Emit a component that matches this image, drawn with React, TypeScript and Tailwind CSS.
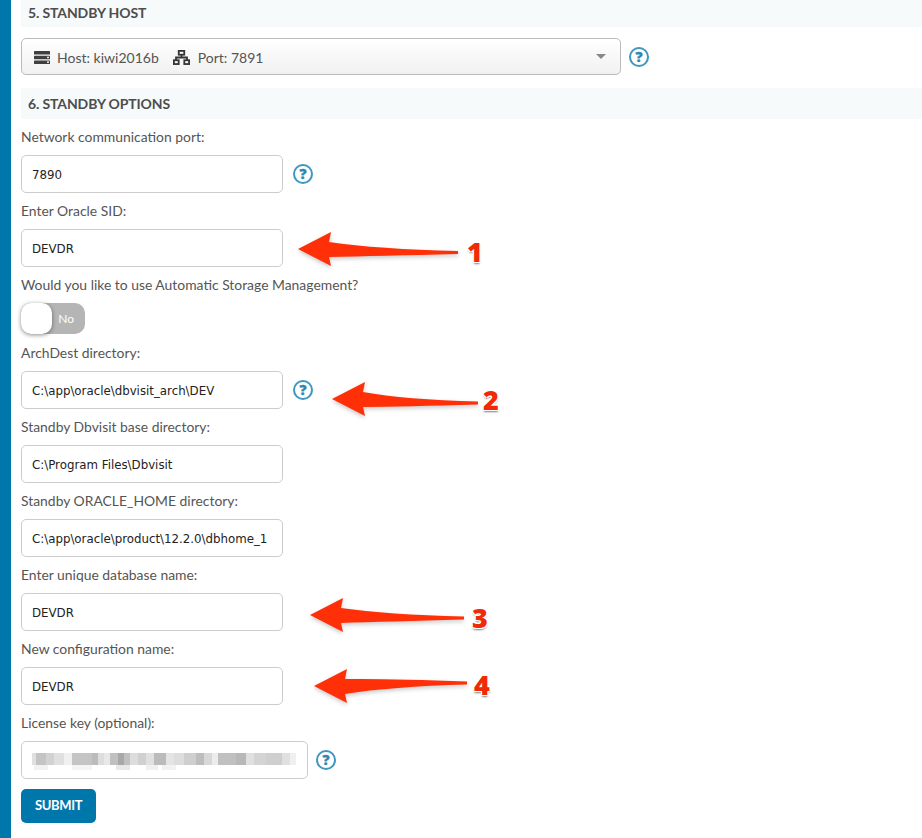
const lato = "font-['Lato','Liberation_Sans',sans-serif]";

function Help() {
  return (
    <span className="flex h-5 w-5 shrink-0 items-center justify-center rounded-full border-2 border-[#3f96bf] font-['Open_Sans',sans-serif] text-[14px] leading-none font-extrabold text-[#2f86b3] [-webkit-text-stroke:0.3px_#2f86b3]">
      ?
    </span>
  );
}

function Heading({ children, className }: { children: string; className: string }) {
  return (
    <div className={`flex items-center bg-[#f6fafb] pl-[7px] text-[14px] font-bold tracking-[-0.12px] text-[#4d4d4d] ${className}`}>
      {children}
    </div>
  );
}

function Field({
  label,
  value,
  help,
  wide,
  children,
}: {
  label: string;
  value?: string;
  help?: boolean;
  wide?: boolean;
  children?: React.ReactNode;
}) {
  return (
    <div className="pt-2">
      <div className="mb-2 h-5 text-[13.9px] leading-5 text-[#555555]">{label}</div>
      <div className={`flex items-center ${wide ? "gap-2" : "gap-[10px]"}`}>
        <div
          className={`flex h-[38px] items-center rounded-[5px] border border-[#cccccc] bg-white px-[10px] pt-[3px] font-['DejaVu_Sans',sans-serif] text-[11.8px] whitespace-nowrap text-[#222222] ${wide ? "w-[287px]" : "w-[262px]"}`}
        >
          {value}
          {children}
        </div>
        {help && <Help />}
      </div>
    </div>
  );
}

function Arrow({ left, top, width, dy }: { left: number; top: number; width: number; dy: number }) {
  const e = 17 + dy;
  return (
    <svg
      className="absolute overflow-visible drop-shadow-[0_2px_2px_rgba(0,0,0,0.22)]"
      style={{ left, top }}
      width={width}
      height={34}
      viewBox={`0 0 ${width} 34`}
    >
      <path
        d={`M0 17 L33 0 L31 10 Q${width * 0.5} ${e - 4 + dy * 0.2} ${width} ${e - 1.5} L${width} ${e + 1.5} Q${width * 0.5} ${e + 3.5} 31 25 L33 34 Z`}
        fill="#ff3008"
      />
    </svg>
  );
}

function Num({ left, top, children }: { left: number; top: number; children: string }) {
  return (
    <span
      className="absolute font-['Open_Sans',sans-serif] text-[27px] leading-none font-extrabold text-[#ef2a06] [text-shadow:-1px_-1px_0_#fff,1px_-1px_0_#fff,-1px_1px_0_#fff,1px_1px_0_#fff,0_2px_2px_rgba(0,0,0,0.5)]"
      style={{ left, top }}
    >
      {children}
    </span>
  );
}

const blur = [
  [0, 4, "#e0e0e0"], [4, 10, "#c4c4c4"], [14, 8, "#d2d2d2"], [22, 10, "#e0e0e0"], [32, 8, "#f0f0f0"],
  [40, 20, "#c4c4c4"], [60, 6, "#bbbbbb"], [66, 6, "#dddddd"], [72, 6, "#e8e8e8"], [78, 8, "#c0c0c0"],
  [86, 6, "#a8a8a8"], [92, 6, "#c0c0c0"], [98, 8, "#dddddd"], [106, 8, "#d0d0d0"], [114, 8, "#e0e0e0"],
  [122, 12, "#bbbbbb"], [134, 8, "#e4e4e4"], [142, 10, "#dddddd"], [152, 12, "#cfcfcf"], [164, 8, "#bdbdbd"],
  [172, 8, "#d8d8d8"], [180, 6, "#ececec"], [186, 18, "#c0c0c0"], [204, 10, "#b8b8b8"], [214, 8, "#e0e0e0"],
  [222, 12, "#d4d4d4"], [234, 16, "#cfcfcf"], [250, 8, "#e0e0e0"], [258, 6, "#f0f0f0"],
] as const;

const blurLow = [
  [2, 14, "#f2f2f2"], [40, 20, "#f4f4f4"], [84, 14, "#e8e8e8"], [114, 12, "#f0f0f0"], [130, 14, "#f2f2f2"],
] as const;

export default function App() {
  return (
    <div className={`relative flex h-[838px] w-[922px] overflow-hidden bg-white ${lato}`}>
      <div className="w-[11px] shrink-0 bg-[#0077aa]" />
      <main className="flex-1 pl-[10px]">
        <Heading className="h-[27px] pb-[2px]">5. STANDBY HOST</Heading>
        <div className="mt-[11px] flex items-center gap-2">
          <div className="flex h-[37px] w-[600px] items-center justify-between rounded-[5px] border border-[#bbbbbb] bg-gradient-to-b from-white to-[#f1f1f1] pt-px pr-[14px] pl-[12px] text-[14px] text-[#555555]">
            <div className="flex items-center">
              <svg width="16" height="13" viewBox="0 0 16 13" fill="#3f3f3f" className="mr-[7px]">
                <rect x="0" y="0" width="16" height="3.6" rx="0.5" />
                <rect x="0" y="4.7" width="16" height="3.6" rx="0.5" />
                <rect x="0" y="9.4" width="16" height="3.6" rx="0.5" />
                <rect x="13" y="5.7" width="2" height="1.5" fill="#eee" />
                <rect x="13" y="10.4" width="2" height="1.5" fill="#eee" />
              </svg>
              <span>Host: kiwi2016b</span>
              <svg width="17" height="15" viewBox="0 0 17 15" fill="none" stroke="#333333" strokeWidth="1.8" className="mr-2 ml-[14px]">
                <rect x="5.75" y="0.9" width="5.5" height="3.8" />
                <path d="M8.5 5v2.5M3 10V7.5h11V10" />
                <rect x="0.9" y="10.25" width="4.8" height="3.8" />
                <rect x="11.3" y="10.25" width="4.8" height="3.8" />
              </svg>
              <span>Port: 7891</span>
            </div>
            <div className="mb-[2px] h-0 w-0 border-x-[5px] border-t-[5px] border-x-transparent border-t-[#888888]" />
          </div>
          <Help />
        </div>
        <Heading className="mt-[13px] h-[31px]">6. STANDBY OPTIONS</Heading>
        <Field label="Network communication port:" value="7890" help />
        <Field label="Enter Oracle SID:" value="DEVDR" />
        <div className="pt-2">
          <div className="mb-2 h-5 text-[13.9px] leading-5 text-[#555555]">Would you like to use Automatic Storage Management?</div>
          <div className="relative flex h-[31px] w-16 items-center justify-end rounded-[10px] bg-[#b5b5b5] pr-[11px] text-[12px] text-white">
            No
            <div className="absolute top-0 left-0 h-[31px] w-[31px] rounded-[10px] bg-white shadow-[0_1px_4px_rgba(0,0,0,0.45)]" />
          </div>
        </div>
        <div className="h-px" />
        <Field label="ArchDest directory:" value="C:\app\oracle\dbvisit_arch\DEV" help />
        <Field label="Standby Dbvisit base directory:" value="C:\Program Files\Dbvisit" />
        <Field label="Standby ORACLE_HOME directory:" value="C:\app\oracle\product\12.2.0\dbhome_1" />
        <Field label="Enter unique database name:" value="DEVDR" />
        <Field label="New configuration name:" value="DEVDR" />
        <Field label="License key (optional):" help wide>
          <svg width="264" height="22" viewBox="0 0 264 22" className="blur-[0.7px]">
            {blur.map(([x, w, c], i) => (
              <rect key={i} x={x} y={2} width={w} height={12} fill={c} />
            ))}
            {blurLow.map(([x, w, c], i) => (
              <rect key={i} x={x} y={14} width={w} height={5} fill={c} />
            ))}
          </svg>
        </Field>
        <button className="mt-[10px] flex h-[34px] w-[75px] items-center justify-center rounded-[5px] bg-[#0077aa] text-[13px] font-bold tracking-[-0.35px] text-white">
          SUBMIT
        </button>
      </main>

      <Arrow left={298} top={232} width={160} dy={3.5} />
      <Num left={467} top={238}>1</Num>
      <Arrow left={332} top={382} width={146} dy={4} />
      <Num left={483} top={386}>2</Num>
      <Arrow left={310} top={598} width={154} dy={3} />
      <Num left={472} top={604}>3</Num>
      <Arrow left={314} top={669} width={153} dy={-3} />
      <Num left={474} top={671}>4</Num>
    </div>
  );
}
